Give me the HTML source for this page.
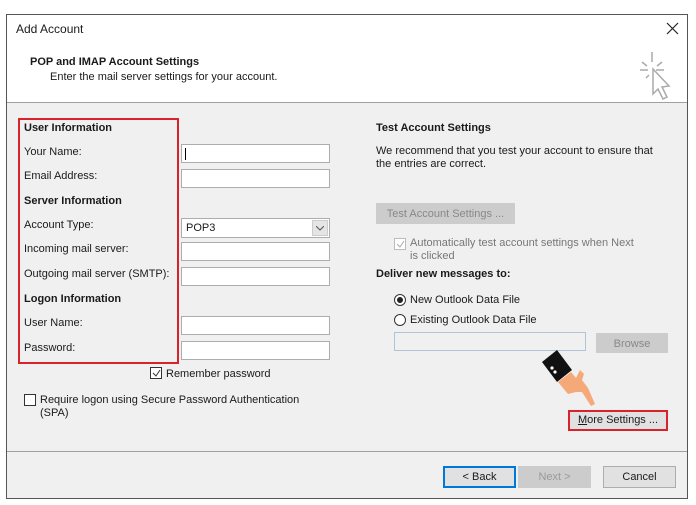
<!DOCTYPE html>
<html><head><meta charset="utf-8"><style>
*{margin:0;padding:0;box-sizing:border-box}
body{width:696px;height:505px;background:#fff;font-family:"Liberation Sans",sans-serif;font-size:11px;color:#1a1a1a;position:relative;overflow:hidden}
.a{position:absolute;white-space:nowrap;line-height:13px}
.b{font-weight:bold}
.in{position:absolute;background:#fff;border:1px solid #adadad;height:19px;width:149px;left:181px}
.btn{position:absolute;background:#e1e1e1;border:1px solid #adadad;text-align:center;line-height:20px;height:21px}
.dis{color:#9a9a9a;background:#ccc;border-color:#ccc}
.cb{position:absolute;width:12px;height:12px;border:1px solid #333;background:#fff}
</style></head><body>
<div style="position:absolute;left:6px;top:14px;width:682px;height:485px;border:1px solid #555;background:#f0f0f0"></div>
<div style="position:absolute;left:7px;top:15px;width:680px;height:88px;background:#fff;border-bottom:1px solid #a0a0a0"></div>
<div class="a" style="left:16px;top:23px;font-size:12px">Add Account</div>
<svg style="position:absolute;left:666px;top:22px" width="13" height="13"><path d="M1 1L12 12M12 1L1 12" stroke="#222" stroke-width="1.2"/></svg>
<svg style="position:absolute;left:636px;top:48px" width="40" height="52" fill="none" stroke="#aaa" stroke-width="1.5"><path d="M16 4V14M6 14L11 18M26 14L21 18M4 22H12M20 22H28M10 30L13 27"/><path d="M17 21V46L22 41L27 51L31 49L26 39L33 38Z"/></svg>
<div class="a b" style="left:30px;top:56px">POP and IMAP Account Settings</div>
<div class="a" style="left:50px;top:71px">Enter the mail server settings for your account.</div>

<div style="position:absolute;left:18px;top:118px;width:161px;height:246px;border:2px solid #d9232a"></div>
<div class="a b" style="left:24px;top:122px">User Information</div>
<div class="a" style="left:24px;top:146px">Your Name:</div>
<div class="a" style="left:24px;top:170px">Email Address:</div>
<div class="a b" style="left:24px;top:195px">Server Information</div>
<div class="a" style="left:24px;top:219px">Account Type:</div>
<div class="a" style="left:24px;top:243px">Incoming mail server:</div>
<div class="a" style="left:24px;top:268px">Outgoing mail server (SMTP):</div>
<div class="a b" style="left:24px;top:293px">Logon Information</div>
<div class="a" style="left:24px;top:317px">User Name:</div>
<div class="a" style="left:24px;top:342px">Password:</div>

<div class="in" style="top:144px"><div style="position:absolute;left:3px;top:3px;width:1px;height:12px;background:#000"></div></div>
<div class="in" style="top:169px"></div>
<div class="in" style="top:218px;height:20px"><div class="a" style="left:4px;top:3px">POP3</div><div style="position:absolute;right:1px;top:1px;width:16px;height:16px;background:#e5e5e5;border:1px solid #ccc"></div><svg style="position:absolute;right:5px;top:7px" width="8" height="5"><path d="M0 0L4 4L8 0" stroke="#555" fill="none"/></svg></div>
<div class="in" style="top:242px"></div>
<div class="in" style="top:267px"></div>
<div class="in" style="top:316px"></div>
<div class="in" style="top:341px"></div>

<div class="cb" style="left:150px;top:367px"><svg style="position:absolute;left:1px;top:1px" width="9" height="9"><path d="M1 4L4 7L8 1" stroke="#333" fill="none"/></svg></div>
<div class="a" style="left:166px;top:368px">Remember password</div>
<div class="cb" style="left:24px;top:394px"></div>
<div class="a" style="left:40px;top:394px">Require logon using Secure Password Authentication</div>
<div class="a" style="left:40px;top:407px">(SPA)</div>

<div class="a b" style="left:376px;top:122px">Test Account Settings</div>
<div class="a" style="left:376px;top:145px">We recommend that you test your account to ensure that</div>
<div class="a" style="left:376px;top:158px">the entries are correct.</div>
<div class="btn dis" style="left:376px;top:203px;width:139px;color:#888">Test Account Settings ...</div>
<div class="cb" style="left:394px;top:238px;border-color:#bbb"><svg style="position:absolute;left:1px;top:1px" width="9" height="9"><path d="M1 4L4 7L8 1" stroke="#aaa" fill="none"/></svg></div>
<div class="a" style="left:410px;top:237px;color:#777">Automatically test account settings when Next</div>
<div class="a" style="left:410px;top:250px;color:#777">is clicked</div>
<div class="a b" style="left:376px;top:268px">Deliver new messages to:</div>
<div style="position:absolute;left:394px;top:294px;width:12px;height:12px;border:1px solid #333;border-radius:50%;background:#fff"><div style="position:absolute;left:2px;top:2px;width:6px;height:6px;border-radius:50%;background:#222"></div></div>
<div class="a" style="left:410px;top:294px">New Outlook Data File</div>
<div style="position:absolute;left:394px;top:314px;width:12px;height:12px;border:1px solid #333;border-radius:50%;background:#fff"></div>
<div class="a" style="left:410px;top:314px">Existing Outlook Data File</div>
<div style="position:absolute;left:394px;top:332px;width:192px;height:19px;border:1px solid #b0c4d8;background:#f0f0f0"></div>
<div class="btn dis" style="left:596px;top:333px;width:72px;height:20px;color:#888">Browse</div>

<svg style="position:absolute;left:540px;top:348px" width="70" height="62">
<path d="M2 14L17 2L32 22L17 34Z" fill="#111"/>
<circle cx="12" cy="20" r="1.6" fill="#fff"/><circle cx="15" cy="24" r="1.6" fill="#fff"/>
<path d="M18 34L31 24L36 30L40 22L44 26L42 32L48 40L55 56L51 58L42 44L36 44L28 46Z" fill="#f5a878"/>
</svg>

<div class="btn" style="left:568px;top:410px;width:100px;height:21px;border:2px solid #d9232a;line-height:17px"><u>M</u>ore Settings ...</div>

<div style="position:absolute;left:7px;top:451px;width:680px;height:1px;background:#a0a0a0"></div>
<div class="btn" style="left:443px;top:466px;width:73px;height:22px;border:2px solid #0078d7;line-height:19px">&lt; Back</div>
<div class="btn dis" style="left:518px;top:466px;width:73px;height:22px">Next &gt;</div>
<div class="btn" style="left:603px;top:466px;width:73px;height:22px">Cancel</div>
</body></html>
